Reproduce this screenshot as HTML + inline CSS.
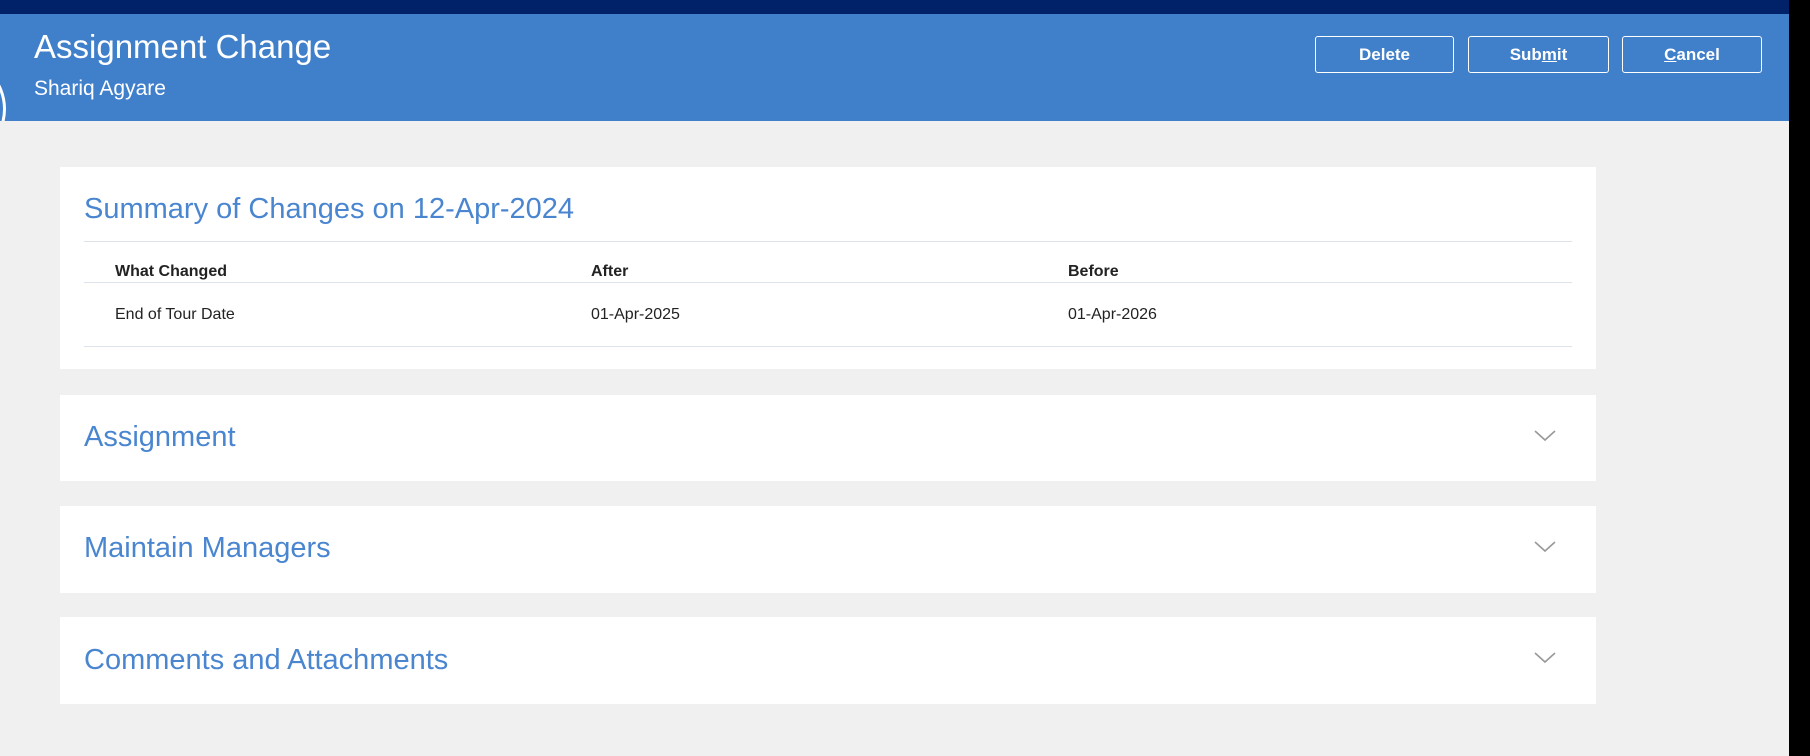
<!DOCTYPE html>
<html><head><meta charset="utf-8"><style>
*{margin:0;padding:0;box-sizing:border-box}
body{width:1810px;height:756px;background:#f0f0f0;font-family:"Liberation Sans",sans-serif;position:relative;overflow:hidden}
.top{position:absolute;left:0;top:0;width:1810px;height:14px;background:#012169}
.hdr{position:absolute;left:0;top:14px;width:1810px;height:107px;background:#407fca;overflow:hidden}
.blk{position:absolute;left:1789px;top:0;width:21px;height:756px;background:#000}
.circ{position:absolute;left:-100px;top:42px;width:106px;height:106px;border-radius:50%;border:3px solid #fff}
.t1{position:absolute;left:34px;top:28px;color:#fff;font-size:33px;font-weight:300}
.t2{position:absolute;left:34px;top:77px;color:#fff;font-size:21px}
.btn{position:absolute;top:36px;height:37px;border:1px solid #fff;border-radius:3px;color:#fff;font-size:17px;font-weight:bold;text-align:center;line-height:35px}
.card{position:absolute;left:60px;width:1536px;background:#fff}
.ct{position:absolute;left:24px;color:#4a86d0;font-size:29px;font-weight:300}
.line{position:absolute;left:24px;width:1488px;height:1px;background:#dde3ea}
.c{position:absolute;font-size:16px;color:#222}
.chev{position:absolute;left:1473px;width:24px;height:14px}
</style></head><body>
<div class="top"></div>
<div class="hdr">
<div class="circ"></div>
</div>
<div class="t1">Assignment Change</div>
<div class="t2">Shariq Agyare</div>
<div class="btn" style="left:1315px;width:139px">Delete</div>
<div class="btn" style="left:1468px;width:141px">Sub<u>m</u>it</div>
<div class="btn" style="left:1622px;width:140px"><u>C</u>ancel</div>
<div class="blk"></div>

<div class="card" style="top:167px;height:202px">
<div class="ct" style="top:26px">Summary of Changes on 12-Apr-2024</div>
<div class="line" style="top:74px"></div>
<div class="c" style="left:55px;top:96px;font-weight:600">What Changed</div>
<div class="c" style="left:531px;top:96px;font-weight:600">After</div>
<div class="c" style="left:1008px;top:96px;font-weight:600">Before</div>
<div class="line" style="top:115px"></div>
<div class="c" style="left:55px;top:139px">End of Tour Date</div>
<div class="c" style="left:531px;top:139px">01-Apr-2025</div>
<div class="c" style="left:1008px;top:139px">01-Apr-2026</div>
<div class="line" style="top:179px"></div>
</div>

<div class="card" style="top:395px;height:86px">
<div class="ct" style="top:26px">Assignment</div>
<svg class="chev" style="top:34px" viewBox="0 0 24 14"><path d="M2 2L12 11L22 2" fill="none" stroke="#999" stroke-width="1.6"/></svg>
</div>
<div class="card" style="top:506px;height:87px">
<div class="ct" style="top:26px">Maintain Managers</div>
<svg class="chev" style="top:34px" viewBox="0 0 24 14"><path d="M2 2L12 11L22 2" fill="none" stroke="#999" stroke-width="1.6"/></svg>
</div>
<div class="card" style="top:617px;height:87px">
<div class="ct" style="top:27px">Comments and Attachments</div>
<svg class="chev" style="top:34px" viewBox="0 0 24 14"><path d="M2 2L12 11L22 2" fill="none" stroke="#999" stroke-width="1.6"/></svg>
</div>
</body></html>
